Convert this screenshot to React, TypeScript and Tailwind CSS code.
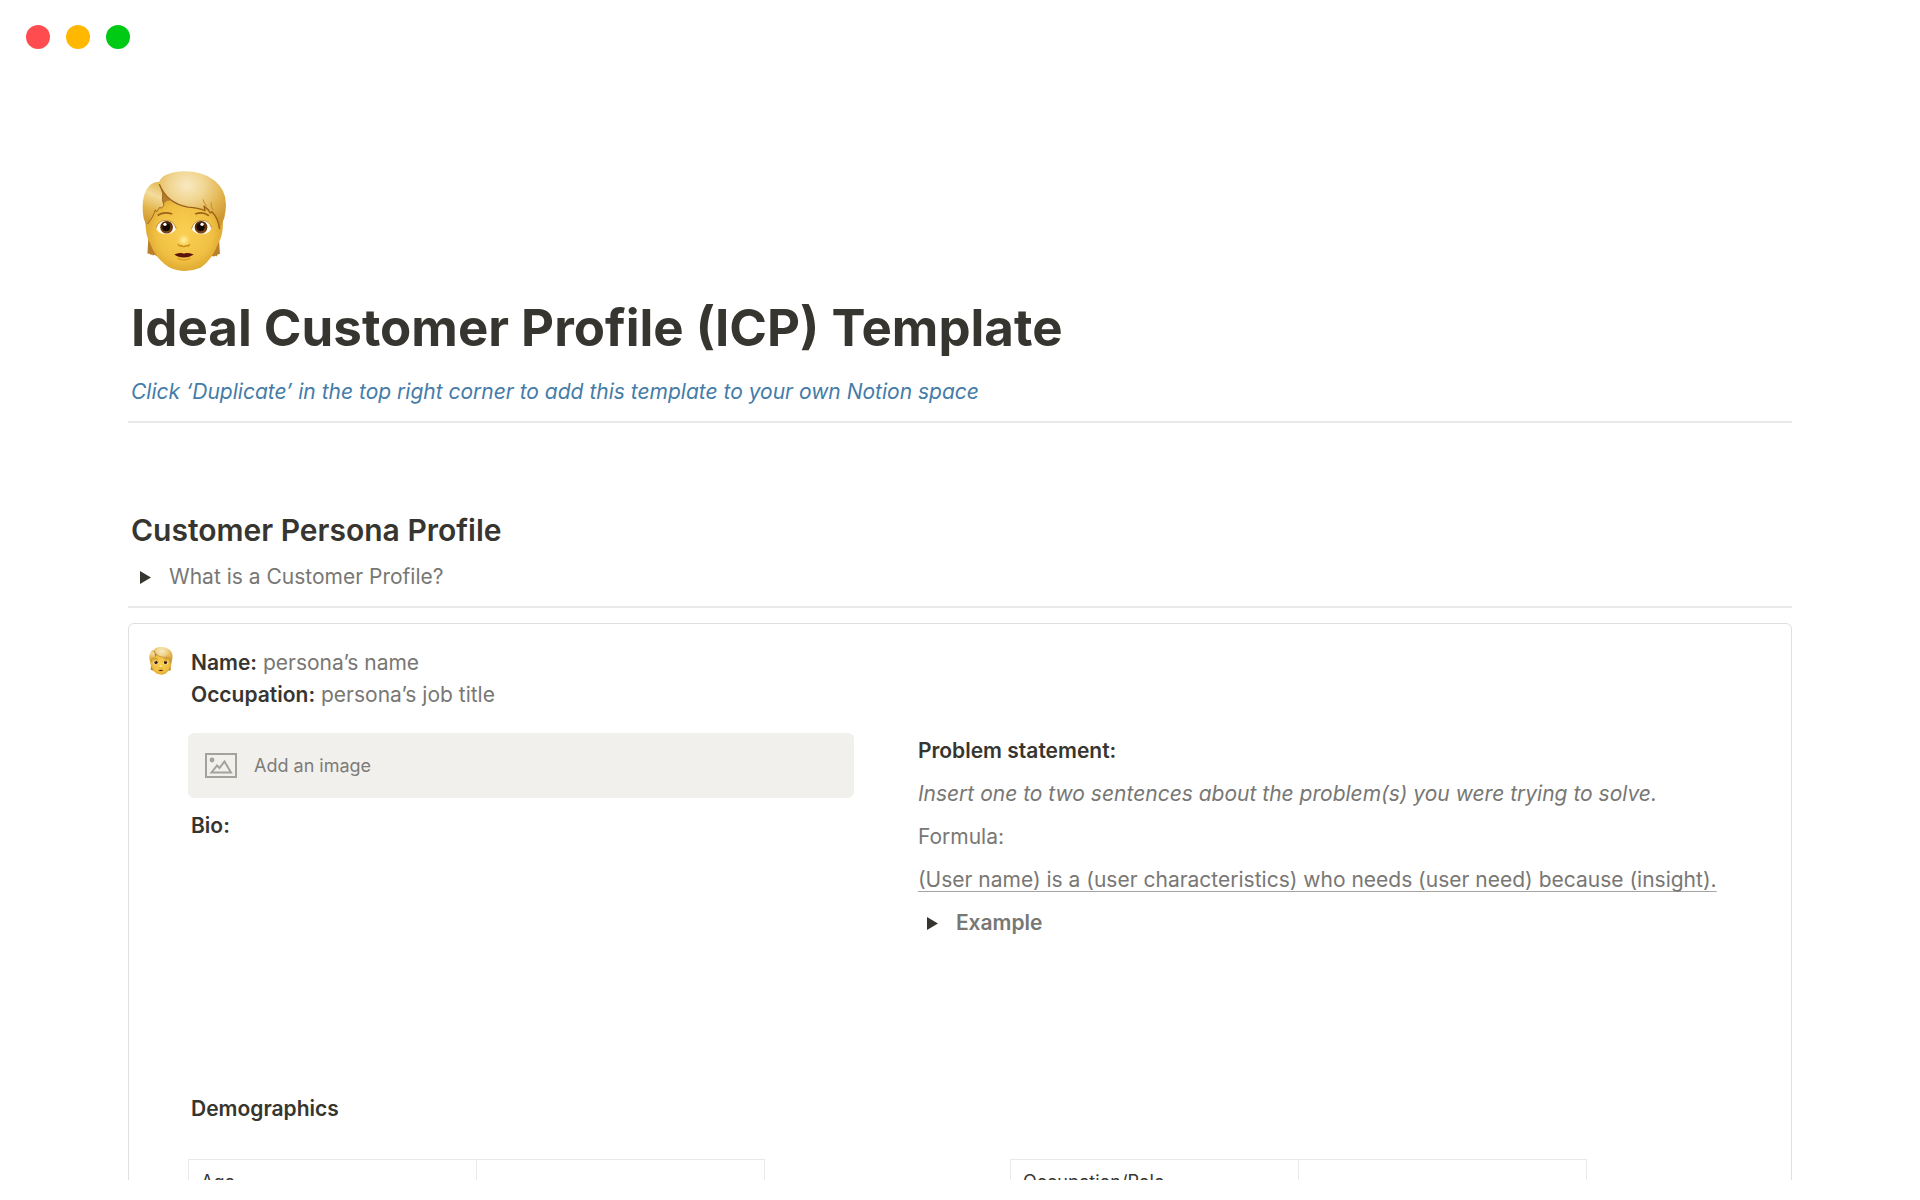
import { ReactNode, useId, useState } from "react";

const demographics = [
  { id: "personal", rows: ["Age", "Gender", "Location"] },
  { id: "work", rows: ["Occupation/Role", "Industry", "Income"] },
];

function PersonIcon({ className }: { className: string }) {
  const id = useId();

  return (
    <svg viewBox="94 62 256 305" className={className} role="img" aria-label="Person">
      <defs>
        <radialGradient id={`${id}skin`} cx="0.5" cy="0.5" r="0.6">
          <stop offset="0" stopColor="#fbd052" />
          <stop offset="0.6" stopColor="#f0c043" />
          <stop offset="1" stopColor="#d39a26" />
        </radialGradient>
        <radialGradient id={`${id}hair`} cx="0.42" cy="0.24" r="0.75">
          <stop offset="0" stopColor="#f9e9c2" />
          <stop offset="0.35" stopColor="#f1d692" />
          <stop offset="0.7" stopColor="#e3b550" />
          <stop offset="1" stopColor="#cf9831" />
        </radialGradient>
        <linearGradient id={`${id}side`} x1="0.6" y1="0" x2="0.4" y2="1">
          <stop offset="0" stopColor="#e3bb56" />
          <stop offset="0.3" stopColor="#f3dc9d" />
          <stop offset="0.65" stopColor="#e3b54a" />
          <stop offset="1" stopColor="#cf9630" />
        </linearGradient>
        <radialGradient id={`${id}iris`} cx="0.55" cy="0.7" r="0.6">
          <stop offset="0" stopColor="#9b5a18" />
          <stop offset="1" stopColor="#4a2107" />
        </radialGradient>
        <radialGradient id={`${id}nose`}>
          <stop offset="0" stopColor="#fff0a0" />
          <stop offset="1" stopColor="#fff0a0" stopOpacity="0" />
        </radialGradient>
      </defs>
      {/* hair behind the jaw */}
      <path d="M113 262 L110 312 Q117 309 120 316 Q124 312 127 318 Q132 312 136 319 L152 322 L150 262Z" fill="#b98029" />
      <path d="M326 262 L329 313 Q321 312 319 320 Q314 315 311 321 Q306 316 302 321 L288 322 L290 262Z" fill="#b98029" />
      {/* face */}
      <path d="M104 214 Q106 150 220 130 Q337 150 338 220 Q338 258 325 278 Q306 330 270 354 Q220 375 174 352 Q134 326 117 278 Q104 258 104 214Z" fill={`url(#${id}skin)`} />
      {/* parting shadow */}
      <path d="M147 92 L150 125 L159 168 Q158 152 180 150 L170 120Z" fill="#b47c2c" />
      {/* side lock */}
      <path d="M151 95 Q116 91 101 132 Q91 165 99 206 L107 226 Q114 222 121 208 Q128 195 134 179 L137 186 Q142 178 148 171 L151 175 Q153 168 160 166 Q152 152 155 132 Q150 116 151 95Z" fill={`url(#${id}side)`} />
      <path d="M150 98 Q151 119 157 129 Q152 150 160 166 L151 175 L148 171 L137 186 L134 179 Q128 202 111 222" fill="none" stroke="#a46b20" strokeWidth="3" strokeLinejoin="round" />
      {/* main fringe */}
      <path d="M145 98 Q150 68 217 63 Q275 62 312 90 Q354 124 346 181 Q345 203 334 223 L327 240 Q325 207 305 186 L300 190 Q295 179 281 169 L283 182 Q264 173 232 172 Q164 162 145 98Z" fill={`url(#${id}hair)`} />
      <path d="M146 102 Q168 159 232 171 Q265 173 284 182 L281 168 Q293 176 300 189 L305 185 Q324 205 328 238" fill="none" stroke="#9a6119" strokeWidth="4" strokeLinejoin="round" />
      <path d="M278 148 Q281 160 289 168 M303 157 Q299 169 309 180" fill="none" stroke="#c58d2f" strokeWidth="3" />
      {/* brows */}
      <path d="M143 195 Q160 184 183 191" fill="none" stroke="#9c6018" strokeWidth="5" strokeLinecap="round" />
      <path d="M256 191 Q278 184 294 196" fill="none" stroke="#9c6018" strokeWidth="5" strokeLinecap="round" />
      {/* eyes */}
      <path d="M136 234 Q144 210 167 211 Q190 212 197 237 Q186 253 164 253 Q143 252 136 234Z" fill="#fdf8e7" />
      <path d="M304 234 Q296 210 273 211 Q250 212 243 237 Q254 253 276 253 Q297 252 304 234Z" fill="#fdf8e7" />
      <circle cx="168" cy="232" r="19" fill={`url(#${id}iris)`} />
      <circle cx="272" cy="232" r="19" fill={`url(#${id}iris)`} />
      <circle cx="167" cy="232" r="12" fill="#160b04" />
      <circle cx="271" cy="232" r="12" fill="#160b04" />
      <circle cx="163" cy="223" r="5" fill="#fff" />
      <circle cx="275" cy="223" r="5" fill="#fff" />
      <path d="M136 234 Q144 210 167 211 Q190 212 197 237" fill="none" stroke="#a06a1c" strokeWidth="2" />
      <path d="M304 234 Q296 210 273 211 Q250 212 243 237" fill="none" stroke="#a06a1c" strokeWidth="2" />
      {/* nose and mouth */}
      <circle cx="220" cy="271" r="19" fill={`url(#${id}nose)`} />
      <path d="M203 284 Q207 291 213 287 Q220 294 227 287 Q234 291 237 284" fill="none" stroke="#c98718" strokeWidth="4" strokeLinecap="round" />
      <path d="M191 314 Q206 309 214 310 Q220 313 226 310 Q235 309 250 314 Q237 323 220 323 Q203 323 191 314Z" fill="#5c120c" />
      <path d="M202 326 Q220 336 239 326" fill="none" stroke="#dc9c25" strokeWidth="4" strokeLinecap="round" />
    </svg>
  );
}

function PictureIcon() {
  return (
    <svg viewBox="0 0 32 25" className="h-[25px] w-8 shrink-0" fill="none" stroke="#a3a29d" strokeWidth="2" aria-hidden="true">
      <rect x="1" y="1" width="30" height="23" />
      <circle cx="7" cy="7" r="2.4" fill="#a3a29d" stroke="none" />
      <path d="M6.500 19.500 L12 12.500 L14.500 15 L19.500 8.500 L26 19.500Z" />
    </svg>
  );
}

function Toggle({ label, children }: { label: ReactNode; children: ReactNode }) {
  const [open, setOpen] = useState(false);

  return (
    <div>
      <button
        type="button"
        aria-expanded={open}
        onClick={() => setOpen(!open)}
        className="flex items-center gap-[18px] pl-[9px] text-left text-[#787774]"
      >
        <svg viewBox="0 0 11 13" className={open ? "h-[13px] w-[11px] rotate-90" : "h-[13px] w-[11px]"} aria-hidden="true">
          <path d="M0 0 L11 6.500 L0 13Z" fill="#37352f" />
        </svg>
        {label}
      </button>
      {open && <div className="pl-[38px]">{children}</div>}
    </div>
  );
}

function DemographicsTable({ rows }: { rows: string[] }) {
  return (
    <table className="w-[577px] table-fixed border-collapse text-[18px] leading-7">
      <tbody>
        {rows.map((row) => (
          <tr key={row}>
            <th scope="row" className="border border-[#e9e9e7] px-3 py-2 text-left font-normal">
              {row}
            </th>
            <td className="border border-[#e9e9e7] px-3 py-2"></td>
          </tr>
        ))}
      </tbody>
    </table>
  );
}

export default function App() {
  return (
    <div className="h-screen bg-white pb-5 font-['Inter','Liberation_Sans',sans-serif] text-[21px] leading-8 text-[#37352f]">
      <div className="h-full overflow-hidden">
        <header className="flex gap-4 px-[26px] pt-[25px]">
          <span className="size-6 rounded-full bg-[#ff4d4f]" />
          <span className="size-6 rounded-full bg-[#ffb700]" />
          <span className="size-6 rounded-full bg-[#00ca14]" />
        </header>

        <main className="px-32 pt-[122px]">
          <div className="px-[3px]">
            <PersonIcon className="ml-[11px] h-[101px] w-[85px]" />
            <h1 className="mt-6 text-[51px] leading-[64px] font-bold">
              Ideal Customer Profile (ICP) Template
            </h1>
            <p className="mt-4 text-[#447ca8] italic">
              Click ‘Duplicate’ in the top right corner to add this template to your own Notion space
            </p>
          </div>
          <hr className="mt-[13px] border-t-2 border-[#e9e9e7]" />

          <div className="mt-[87px] px-[3px]">
            <h2 className="mb-[11px] text-[30px] leading-10 font-semibold">Customer Persona Profile</h2>
            <Toggle label="What is a Customer Profile?">
              A description of the person who gets the most value from your product.
            </Toggle>
          </div>
          <hr className="mt-[13px] border-t-2 border-[#e9e9e7]" />

          <section className="mt-[15px] flex gap-[15px] rounded-md border border-[#dfdfde] px-5 py-[23px]">
            <PersonIcon className="h-7 w-6 shrink-0" />
            <div className="min-w-0 flex-1">
              <p className="px-[3px] text-[#787774]">
                <strong className="font-semibold text-[#37352f]">Name:</strong> persona’s name
                <br />
                <strong className="font-semibold text-[#37352f]">Occupation:</strong> persona’s job title
              </p>

              <div className="mt-[22px] grid min-h-[360px] grid-cols-[7fr_9fr] gap-x-[61px]">
                <div>
                  <button
                    type="button"
                    className="flex w-full items-center gap-[17px] rounded-md bg-[#f1f0ec] px-[17px] py-4 text-left text-[18px] leading-[33px] text-[#7d7c78]"
                  >
                    <PictureIcon />
                    Add an image
                  </button>
                  <h3 className="mt-3 px-[3px] font-semibold">Bio:</h3>
                </div>
                <div className="flex flex-col gap-[11px] px-[3px] pt-[2px] text-[#787774]">
                  <h3 className="font-semibold text-[#37352f]">Problem statement:</h3>
                  <p className="italic">Insert one to two sentences about the problem(s) you were trying to solve.</p>
                  <p>Formula:</p>
                  <p className="underline decoration-[#a5a4a1] decoration-1 underline-offset-4 [text-decoration-skip-ink:none]">
                    (User name) is a (user characteristics) who needs (user need) because (insight).
                  </p>
                  <Toggle label={<strong className="font-semibold">Example</strong>}>
                    Sam is a busy designer who needs quick feedback because deadlines are short.
                  </Toggle>
                </div>
              </div>

              <h3 className="px-[3px] font-semibold">Demographics</h3>
              <div className="mt-[34px] grid grid-cols-2 gap-x-[61px]">
                {demographics.map((table) => (
                  <DemographicsTable key={table.id} rows={table.rows} />
                ))}
              </div>
            </div>
          </section>
        </main>
      </div>
    </div>
  );
}
